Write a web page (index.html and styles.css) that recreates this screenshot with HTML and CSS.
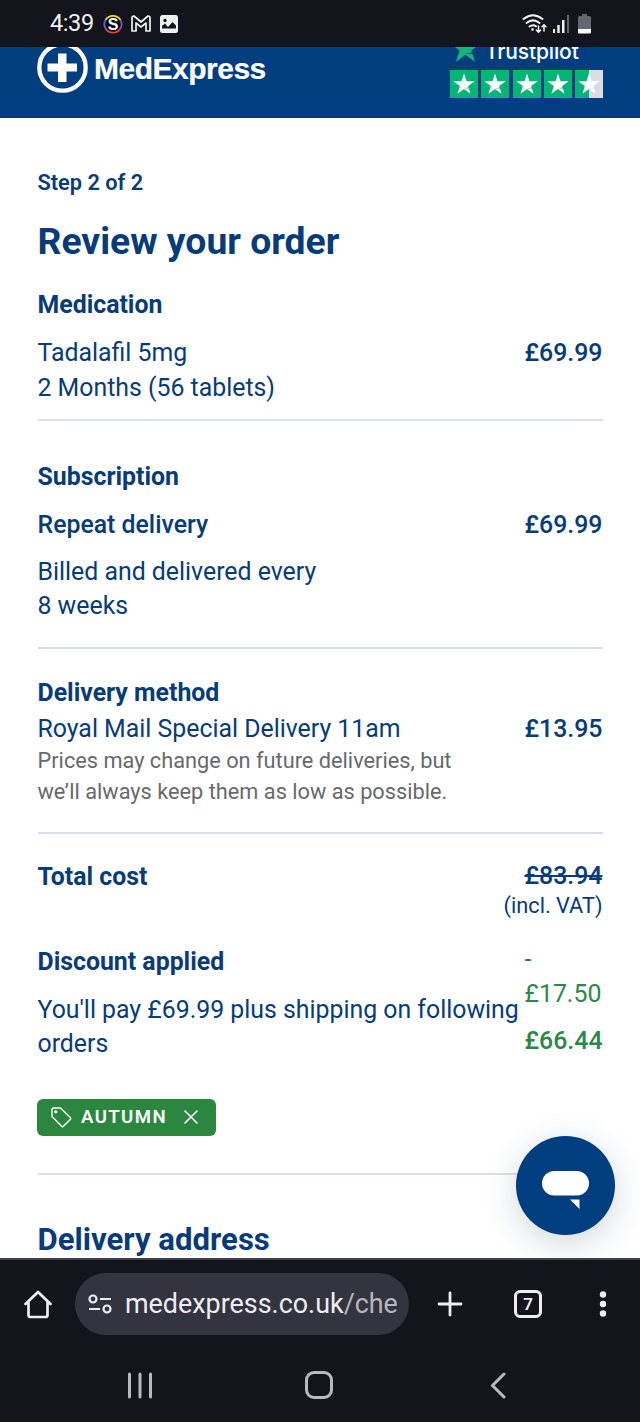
FILE: index.html
```html
<!DOCTYPE html>
<html lang="en">
<head>
<meta charset="utf-8">
<title>MedExpress – Review your order</title>
<link rel="stylesheet" href="styles.css">
</head>
<body>
<svg class="defs" width="0" height="0" aria-hidden="true">
  <symbol id="star" viewBox="0 0 28 28"><path d="M14 3.500l2.500 7.700h8.200l-6.600 4.800 .5 1.500L14 18.300l4.900 .2 1.700 5.300L14 19l-6.600 4.800 2.500-7.800-6.600-4.800h8.200z"/></symbol>
</svg>
<div class="status">
  <span class="clock">4:39</span>
  <svg class="s-badge" width="20" height="20" viewBox="0 0 20 20" fill="none" stroke-width="1.800">
    <circle cx="10" cy="10" r="9" fill="#08080c"/>
    <path d="M2.500 6A8.900 8.900 0 0 1 17.500 6" stroke="#f3df3c"/>
    <path d="M17.500 6A8.900 8.900 0 0 1 17.500 14.500M2.500 6A8.900 8.900 0 0 0 2.500 14.500" stroke="#5962d8"/>
    <path d="M17.500 14.500A8.900 8.900 0 0 1 2.500 14.500" stroke="#e2423f"/>
    <text x="10" y="16" text-anchor="middle" class="s-letter">S</text>
  </svg>
  <svg class="gmail" width="20" height="17" viewBox="0 0 20 17" fill="none" stroke="#f1f1f3" stroke-width="1.700" stroke-linejoin="round"><path d="M1 3Q1 1 3 1L10 7 17 1Q19 1 19 3V16H15V8L10 12 5 8V16H1z"/></svg>
  <svg class="photo" width="18" height="18" viewBox="0 0 18 18"><rect width="18" height="18" rx="2.500" fill="#f1f1f3"/><circle cx="5" cy="5.500" r="1.700" fill="#13141c"/><path d="M2 13.500V11L5 8.500 8 12l4.500-5L16 10.500v3z" fill="#13141c"/></svg>
  <svg class="wifi" width="26" height="20" viewBox="0 0 26 20" fill="none" stroke="#f1f1f3" stroke-width="2" stroke-linecap="round">
    <path d="M1.500 5Q11 -2.500 20.500 5M4.500 9Q11 3.800 17.500 9M7.500 12.500Q11 10 14 12.200"/><circle cx="10.500" cy="15.500" r="1.300" fill="#f1f1f3" stroke="none"/>
    <path stroke-width="1.600" d="M16.500 12v6M14.500 16.200l2 2 2-2M22 17v-6M20 12.800l2-2 2 2"/>
  </svg>
  <svg class="signal" width="18" height="18" viewBox="0 0 18 18" fill="#f1f1f3"><path d="M1 14h2v4H1zM5.300 10h2.400v8H5.300zM10 5h2.500v13H10z"/><path d="M15 0h2v18h-2z" fill="#65666e"/></svg>
  <svg class="battery" width="13" height="20" viewBox="0 0 13 20"><path d="M4 0h5v2h2.500Q13 2 13 3.500V15H0V3.500Q0 2 1.500 2H4z" fill="#65666e"/><path d="M0 15h13v3q0 1.500-1.500 1.500h-10Q0 19.500 0 18z" fill="#fff"/></svg>
</div>

<header class="site">
  <div class="brand">
    <svg width="51" height="51" viewBox="0 0 51 51"><circle cx="25.500" cy="25.500" r="23.200" fill="none" stroke="#fff" stroke-width="4.300"/><path d="M21 11.500h8.500v10H40v8H29.500V40H21V29.500H10.500v-8H21z" fill="#fff"/></svg>
    <span class="brand-name">MedExpress</span>
  </div>
  <div class="trust">
    <div class="trust-name"><svg width="31" height="30" fill="#16b67b" viewBox="3.300 3.500 21.400 20.300"><use href="#star" width="28" height="28"/></svg><span>Trustpilot</span></div>
    <div class="stars">
      <span><svg viewBox="0 0 28 28"><use href="#star"/></svg></span>
      <span><svg viewBox="0 0 28 28"><use href="#star"/></svg></span>
      <span><svg viewBox="0 0 28 28"><use href="#star"/></svg></span>
      <span><svg viewBox="0 0 28 28"><use href="#star"/></svg></span>
      <span class="half"><svg viewBox="0 0 28 28"><use href="#star"/></svg></span>
    </div>
  </div>
</header>

<main>
  <p class="step">Step 2 of 2</p>
  <h1>Review your order</h1>
  <section class="medication">
    <h2>Medication</h2>
    <div class="row"><p>Tadalafil 5mg<br>2 Months (56 tablets)</p><strong>£69.99</strong></div>
  </section>
  <section class="subscription">
    <h2>Subscription</h2>
    <div class="row"><strong>Repeat delivery</strong><strong>£69.99</strong></div>
    <p class="billing">Billed and delivered every<br>8 weeks</p>
  </section>
  <section class="method">
    <h2>Delivery method</h2>
    <div class="row"><p>Royal Mail Special Delivery 11am</p><strong>£13.95</strong></div>
    <p class="note">Prices may change on future deliveries, but<br>we’ll always keep them as low as possible.</p>
  </section>
  <section class="total">
    <div class="row cost"><h2>Total cost</h2><div class="old"><s>£83.94</s><small>(incl. VAT)</small></div></div>
    <div class="row discount">
      <div><h2>Discount applied</h2><p>You'll pay £69.99 plus shipping on following<br>orders</p></div>
      <div class="saving"><span>-<br>£17.50</span><strong>£66.44</strong></div>
    </div>
    <div class="coupon">
      <svg width="21" height="21" viewBox="0 0 21 21" fill="none" stroke="#fff" stroke-width="1.400" stroke-linejoin="round"><path d="M1 2.500Q1 1 2.500 1H9.500L19.300 10.600Q20.200 11.500 19.300 12.400L12.400 19.300Q11.500 20.200 10.600 19.300L1 9.500z"/><circle cx="4.800" cy="4.800" r=".9" fill="#fff"/></svg>
      <span>AUTUMN</span>
      <svg class="remove" width="14" height="14" viewBox="0 0 14 14" stroke="#fff" stroke-width="1.600" stroke-linecap="round"><path d="M1 1l12 12M13 1L1 13"/></svg>
    </div>
  </section>
  <h2 class="address">Delivery address</h2>
  <div class="chat">
    <svg width="47" height="38" viewBox="0 0 47 38" fill="#fff"><rect width="47" height="24.500" rx="12.250"/><path d="M28 28.500h9.500V38z"/></svg>
  </div>
</main>

<footer>
  <div class="browser">
    <svg class="home" width="28" height="29" viewBox="0 0 28 29" fill="none" stroke="#eeedf5" stroke-width="2.700" stroke-linecap="round" stroke-linejoin="round"><path d="M1.500 14L14 2 26.500 14M4.500 12V25Q4.500 27 6.500 27H21.500Q23.500 27 23.500 25V12"/></svg>
    <div class="url">
      <svg width="24" height="20" viewBox="0 0 24 20" fill="none" stroke="#eeedf5" stroke-width="2.200"><circle cx="5" cy="5" r="3.500"/><path d="M12 5h11M1 15h11"/><circle cx="19" cy="15" r="3.500"/></svg>
      <span>medexpress.co.uk<i>/che</i></span>
    </div>
    <svg class="plus" width="26" height="26" viewBox="0 0 26 26" stroke="#eeedf5" stroke-width="2.800" stroke-linecap="round"><path d="M13 2v22M2 13h22"/></svg>
    <div class="tabs">7</div>
    <svg class="more" width="8" height="26" viewBox="0 0 8 26" fill="#eeedf5"><circle cx="4" cy="3.500" r="3.200"/><circle cx="4" cy="13" r="3.200"/><circle cx="4" cy="22.500" r="3.200"/></svg>
  </div>
  <div class="system">
    <svg width="26" height="27" viewBox="0 0 26 27" stroke="#b9bac0" stroke-width="3" stroke-linecap="round"><path d="M2.500 2v23M13 2v23M23.500 2v23"/></svg>
    <svg class="circle" width="28" height="28" viewBox="0 0 28 28" fill="none" stroke="#b9bac0" stroke-width="3"><rect x="1.500" y="1.500" width="25" height="25" rx="7.500"/></svg>
    <svg class="back" width="16" height="27" viewBox="0 0 16 27" fill="none" stroke="#b9bac0" stroke-width="3" stroke-linecap="round"><path d="M14 2L2.500 13.500 14 25"/></svg>
  </div>
</footer>
</body>
</html>
```
FILE: styles.css
```css
* { box-sizing: border-box; margin: 0; padding: 0; }
body { width: 640px; height: 1422px; overflow: hidden; background: #fff; color: #073b7a; font: 24.85px/34px Roboto, "Liberation Sans", sans-serif; display: flex; flex-direction: column; }
svg { display: block; flex: none; }
.defs { position: absolute; }

.status { height: 47px; flex: none; background: #13141c; color: #f1f1f3; display: flex; align-items: center; padding: 0 49px 0 50px; position: relative; z-index: 2; }
.clock { font-size: 23.5px; width: 44px; letter-spacing: -0.4px; margin-top: -2px; }
.s-badge { margin-left: 9px; }
.s-letter { font: bold 16px "Liberation Sans", sans-serif; fill: #fff; }
.gmail { margin-left: 8px; }
.photo { margin-left: 9px; }
.wifi { margin-left: auto; }
.signal { margin-left: 4px; }
.battery { margin-left: 8px; }

.site { height: 71px; flex: none; background: #013e80; display: flex; justify-content: space-between; padding: 0 37px; color: #fff; overflow: hidden; border-bottom: 1px solid #0d3265; }
.brand { display: flex; gap: 6px; margin-top: -5px; height: 51px; align-items: center; }
.brand-name { font: bold 30px/34px "Liberation Sans", sans-serif; letter-spacing: -0.5px; -webkit-text-stroke: 0.2px #fff; margin-top: 2px; }
.trust { width: 153px; margin-top: -9px; }
.trust-name { display: flex; gap: 4px; height: 32px; font: 500 21px/28px Inter, sans-serif; letter-spacing: -0.15px; }
.trust-name svg { margin-top: -6px; }
.stars { display: flex; justify-content: space-between; }
.stars span { width: 28px; height: 28px; background: #05b578; fill: #fff; }
.stars .half { background: linear-gradient(90deg, #05b578 50%, #dcdce6 50%); }

main { height: 1140px; flex: none; padding: 48px 37.5px 0; overflow: hidden; position: relative; }
h2, strong { font-size: 24.85px; line-height: 34px; font-weight: 700; }
strong { font-weight: 500; }
.step { font-size: 21.75px; font-weight: 600; }
h1 { font-size: 37.3px; line-height: 48px; font-weight: 700; margin-top: 17px; }
section { border-bottom: 2px solid #d9e0ea; }
.row { display: flex; justify-content: space-between; }
.medication { padding: 23px 0 14px; line-height: 35px; }
.medication .row { margin-top: 13px; }
.medication strong, .method strong { padding-top: 1px; }
.subscription { padding: 39px 0 24px; }
.subscription .row { margin-top: 14px; }
.billing { margin-top: 13px; }
.method { padding: 27px 0 25px; }
.method .row { margin-top: 1px; height: 34px; }
.method .row p { padding-top: 1px; }
.note { font-size: 21.75px; line-height: 31px; color: #67696c; }
.total { padding: 26px 0 36px; height: 341px; }
.old { text-align: right; display: flex; flex-direction: column; line-height: 30px; padding-top: 1px; }
.old s { font-weight: 500; }
.old small { font-size: 21.75px; }
.discount { margin-top: 23px; }
.discount h2 { padding-top: 1px; height: 35px; }
.discount p { margin-top: 14px; white-space: nowrap; }
.saving { width: 78px; margin-top: -1px; color: #2e8746; display: flex; flex-direction: column; }
.saving strong { margin-top: 13px; }
.coupon { margin: 38px 0 0 -0.5px; width: 179px; height: 37px; border-radius: 6px; background: #2b8740; color: #fff; display: flex; align-items: center; padding-left: 14px; font-size: 18.6px; font-weight: 600; letter-spacing: 1.4px; }
.coupon span { margin: -2px 0 0 9px; width: 103px; }
.coupon .remove { margin-top: -1px; }
.address { font-size: 31.1px; line-height: 40px; margin-top: 45px; }
/* The chat launcher floats over the page content. */
.chat { position: absolute; right: 25px; bottom: 23px; width: 99px; height: 99px; border-radius: 50%; background: #013e80; display: flex; align-items: center; justify-content: center; padding-top: 8px; box-shadow: 0 8px 34px rgba(20, 55, 80, .2); }

footer { height: 164px; flex: none; background: #13141c; border-top: 2px solid #42434a; position: relative; }
.browser { display: flex; align-items: center; margin-top: 13px; padding-left: 24px; height: 62px; color: #eeedf5; }
.url { width: 334px; height: 62px; border-radius: 31px; background: #34343e; margin-left: 23px; padding-left: 13px; display: flex; align-items: center; }
.url span { margin-left: 13px; width: 272px; overflow: hidden; white-space: nowrap; font-size: 26.9px; }
.url i { font-style: normal; color: #b6b6c0; }
.plus { margin-left: 28px; }
.tabs { width: 28px; height: 28px; margin-left: 51px; border: 3px solid #eeedf5; border-radius: 6px; text-align: center; font-size: 17px; line-height: 22px; font-weight: 600; }
.more { margin-left: 57px; }
.system { display: flex; align-items: center; padding-left: 127px; height: 28px; margin-top: 36px; }
.system .circle { margin-left: 152px; }
.system .back { margin-left: 157px; }
```
